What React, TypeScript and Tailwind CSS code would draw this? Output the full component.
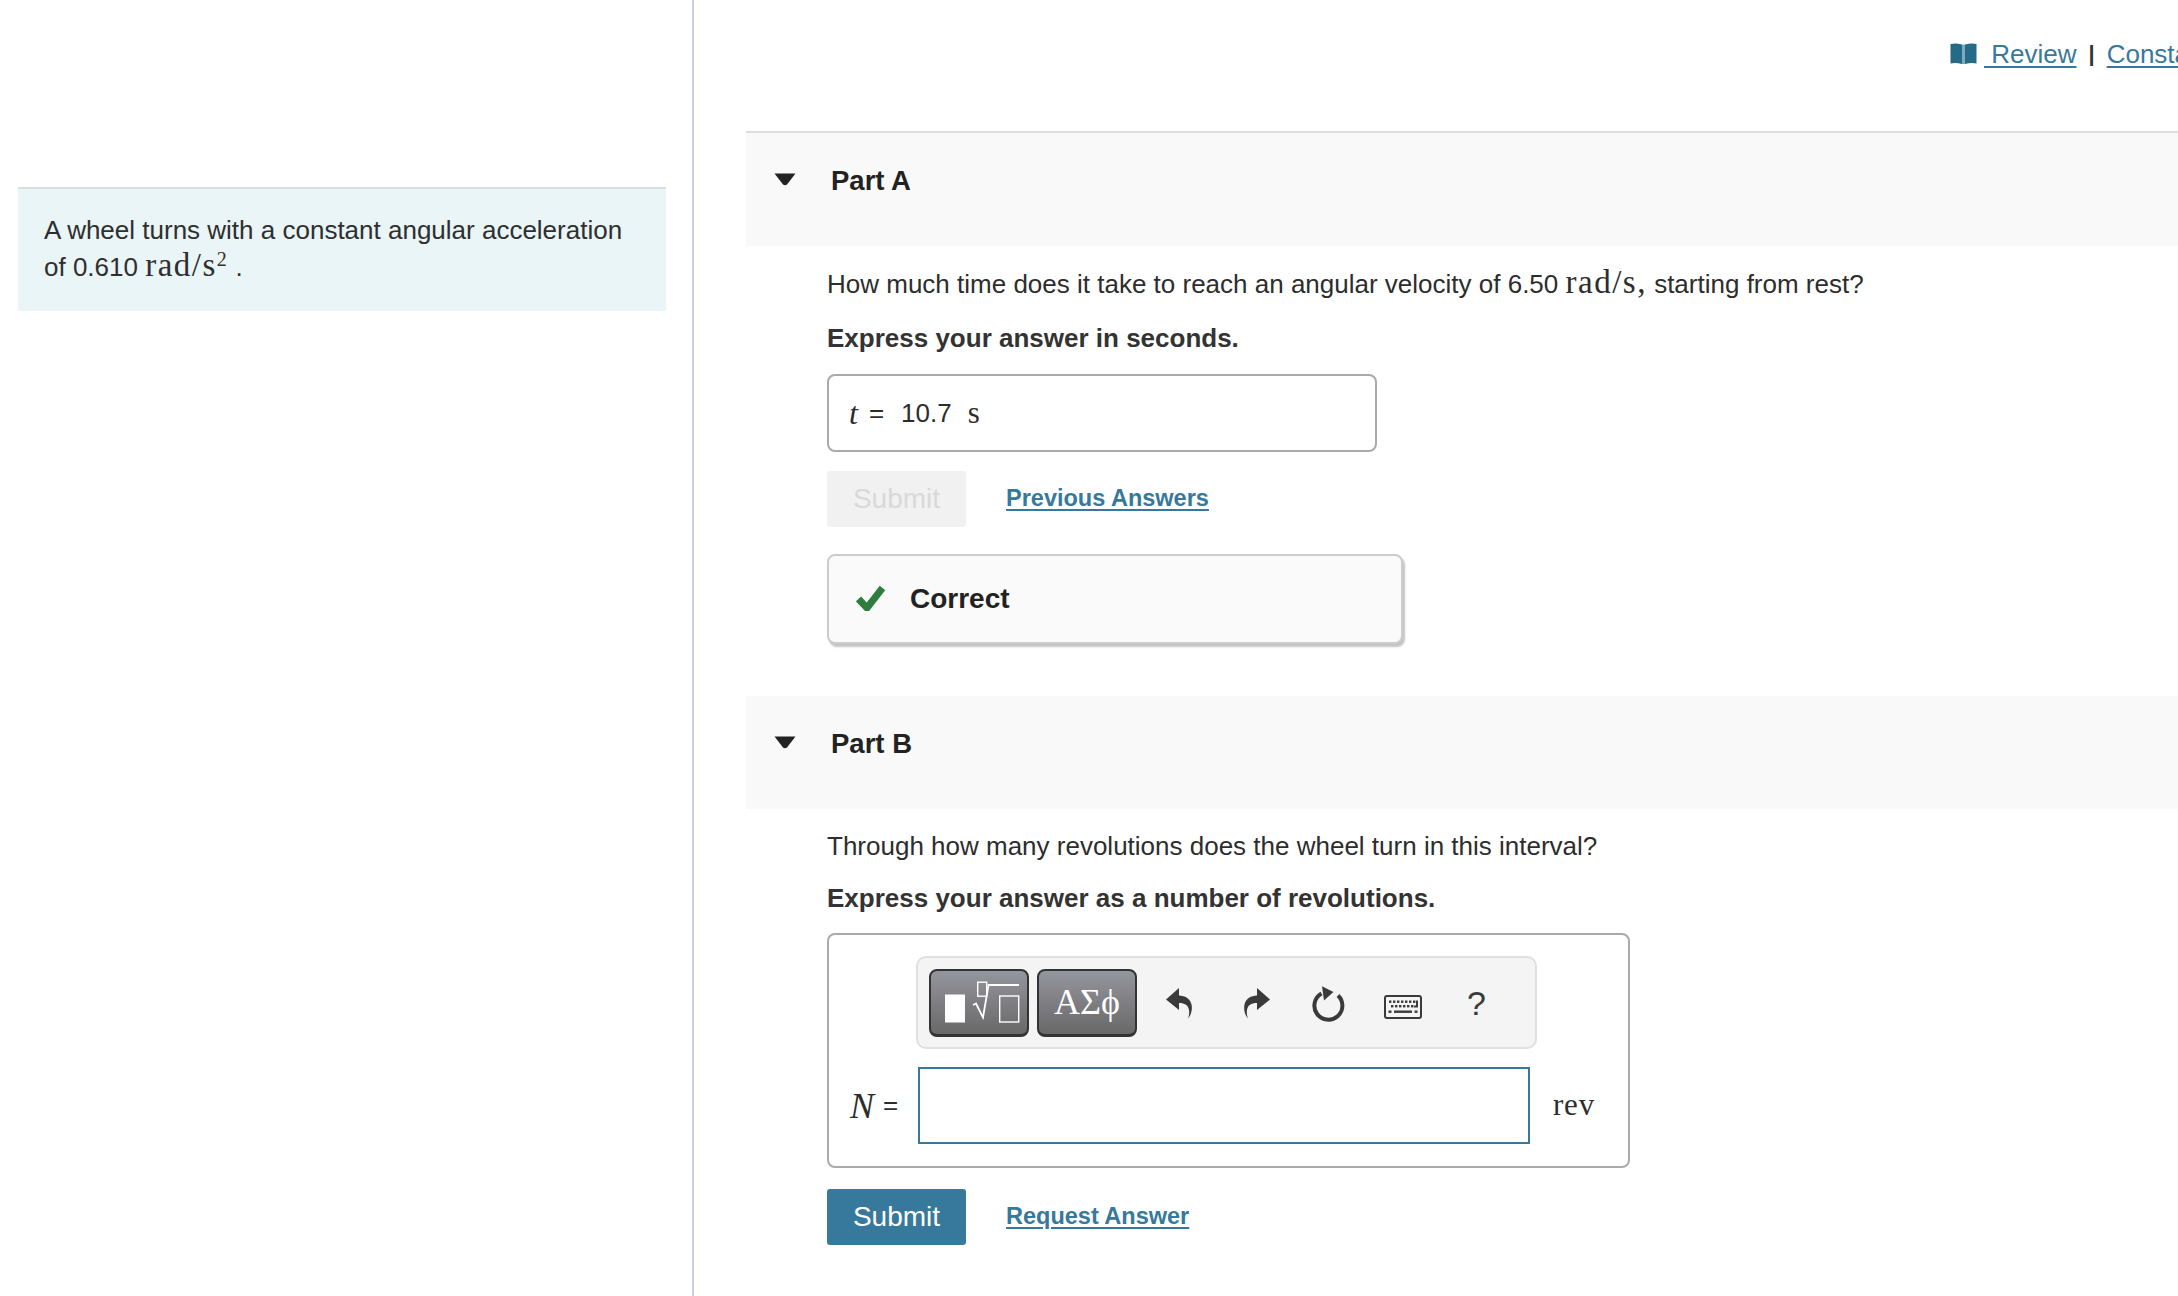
import React from "react";

const sans = "font-['Liberation_Sans',Arial,sans-serif]";
const serif = "font-['Liberation_Serif','Times_New_Roman',serif]";

function Tri() {
  return (
    <svg width="22" height="13" viewBox="0 0 22 13" className="shrink-0">
      <path d="M0.5 0.5H21.5L13 11.5Q11 13 9 11.5Z" fill="#222" />
    </svg>
  );
}

function PartHeader({ label }: { label: string }) {
  return (
    <div className="flex h-[113px] items-start bg-[#f9f9f9] pl-[28px] pt-[27px]">
      <div className="mt-[13px]"><Tri /></div>
      <div className="ml-[35px] text-[27.5px] leading-[42px] font-bold text-[#222]">{label}</div>
    </div>
  );
}

function RootIcon() {
  return (
    <svg width="92" height="50" viewBox="0 0 92 50" className="block">
      <rect x="12" y="17.5" width="20" height="28" fill="#fff" />
      <rect x="44.7" y="5.2" width="9" height="14" fill="none" stroke="#fff" strokeWidth="1.4" />
      <path d="M40 28L43 26.5L50 40.5L55.5 8H86" fill="none" stroke="#fff" strokeWidth="1.8" />
      <rect x="66.7" y="19" width="19" height="26" fill="none" stroke="#fff" strokeWidth="1.4" />
    </svg>
  );
}

function Undo({ flip }: { flip?: boolean }) {
  return (
    <svg width="28" height="32" viewBox="0 0 28 32" className={flip ? "block -scale-x-100" : "block"}>
      <path
        d="M14 1L1 12.5L14 23V16C20 16 23 18 24 23C24.5 26 24 29 23 31.5C26.5 27.5 27.5 22 26.5 17.5C25 11 20 9 14 8.5Z"
        fill="#3a3a3a"
      />
    </svg>
  );
}

function Reload() {
  return (
    <svg width="34" height="38" viewBox="0 0 34 38" className="block">
      <path d="M10.5 9.5A14 14 0 1 0 27 11.5" fill="none" stroke="#3a3a3a" strokeWidth="4" />
      <path d="M12 1.5L22.5 9L12 16Z" fill="#3a3a3a" transform="rotate(-8 16 9)" />
    </svg>
  );
}

function Keyboard() {
  const dots: React.ReactNode[] = [];
  for (let i = 0; i < 7; i++) {
    dots.push(<rect key={"a" + i} x={5 + i * 4} y="5.5" width="2.4" height="2.4" fill="#3a3a3a" />);
    if (i < 6) dots.push(<rect key={"b" + i} x={7 + i * 4} y="10" width="2.4" height="2.4" fill="#3a3a3a" />);
  }
  return (
    <svg width="38" height="24" viewBox="0 0 38 24" className="block">
      <rect x="1" y="1" width="36" height="22" rx="2" fill="#f4f4f4" stroke="#3a3a3a" strokeWidth="2" />
      {dots}
      <path d="M32 5.5H34V12.5H30V10.5H32Z" fill="#3a3a3a" />
      <rect x="4.5" y="15.5" width="3" height="2.4" fill="#3a3a3a" />
      <rect x="10" y="15.5" width="18" height="2.4" fill="#3a3a3a" />
      <rect x="30.5" y="15.5" width="3" height="2.4" fill="#3a3a3a" />
    </svg>
  );
}

function Book() {
  return (
    <svg width="27" height="22" viewBox="0 0 27 22" className="block">
      <path d="M0.5 1Q6 0 12 1.5V21Q6 19.5 0.5 20.5Z" fill="#256a87" />
      <path d="M26.5 1Q21 0 15 1.5V21Q21 19.5 26.5 20.5Z" fill="#256a87" />
      <rect x="12" y="1.5" width="3" height="19.5" fill="#7fa9bc" />
    </svg>
  );
}

export default function App() {
  return (
    <div className={`${sans} flex h-screen w-full overflow-hidden bg-white text-[#2d2d2d]`}>
      <aside className="w-[694px] shrink-0 border-r-2 border-[#c6d3de] pl-[18px] pr-[26px] pt-[187px]">
        <div className="h-[124px] border-t-2 border-[#dcdfe0] bg-[#e9f5f7] px-[26px] pt-[24px] text-[26px] leading-[35px] text-[#2f2f2f]">
          <div className="whitespace-nowrap">A wheel turns with a constant angular acceleration</div>
          <div className="whitespace-nowrap">
            of 0.610 <span className={`${serif} text-[33px] leading-[35px] tracking-[1.5px]`}>rad/s<sup className="text-[20px] leading-none">2</sup></span> .
          </div>
        </div>
      </aside>

      <main className="min-w-0 flex-1 overflow-hidden pl-[52px]">
        <div className="flex h-[131px] items-start whitespace-nowrap pl-[1204px] pt-[38px] text-[26px] leading-[32px] text-[#37799c]">
          <div className="mt-[5px] mr-[7px] shrink-0"><Book /></div>
          <a className="underline underline-offset-[3px]">&nbsp;Review</a>
          <span className="mx-[12px] text-[22px] font-bold text-[#333]">|</span>
          <a className="underline underline-offset-[3px]">Constants</a>
        </div>

        <div className="border-t-2 border-[#dedede]">
          <PartHeader label="Part A" />
        </div>

        <div className="pl-[81px]">
          <div className="mt-[18px] whitespace-nowrap text-[26px] leading-[36px]">
            How much time does it take to reach an angular velocity of 6.50{" "}
            <span className={`${serif} text-[33px] leading-[36px] tracking-[1.5px]`}>rad/s,</span> starting from rest?
          </div>
          <div className="mt-[18px] text-[26px] leading-[36px] font-bold text-[#333]">Express your answer in seconds.</div>
          <div className="mt-[18px] flex h-[78px] w-[550px] items-center rounded-[8px] border-2 border-[#aaa] pl-[20px] text-[26px]">
            <span className={`${serif} text-[32px] italic`}>t</span>
            <span className="ml-[11px]">=</span>
            <span className="ml-[17px]">10.7</span>
            <span className={`${serif} ml-[16px] text-[31px]`}>s</span>
          </div>
          <div className="mt-[19px] flex items-center">
            <div className="flex h-[56px] w-[139px] items-center justify-center rounded-[3px] bg-[#f1f1f1] text-[28px] text-[#d9d9d9]">Submit</div>
            <a className="ml-[40px] text-[23.5px] font-bold text-[#37799c] underline underline-offset-[3px]">Previous Answers</a>
          </div>
          <div className="mt-[27px] flex h-[90px] w-[576px] items-center rounded-[8px] border-2 border-[#ccc] bg-[#fafafa] pl-[27px] shadow-[2px_3px_2px_#c4c4c4]">
            <svg width="29" height="26" viewBox="0 0 29 26" className="shrink-0 -mt-[3px]">
              <path d="M2.5 14L11 23L26.5 3" fill="none" stroke="#2f7d3e" strokeWidth="7" />
            </svg>
            <span className="ml-[25px] text-[28px] font-bold text-[#222]">Correct</span>
          </div>

          <div className="-ml-[81px] mt-[52px]"><PartHeader label="Part B" /></div>

          <div className="mt-[19px] whitespace-nowrap text-[26px] leading-[36px]">Through how many revolutions does the wheel turn in this interval?</div>
          <div className="mt-[16px] text-[26px] leading-[36px] font-bold text-[#333]">Express your answer as a number of revolutions.</div>

          <div className="mt-[17px] h-[235px] w-[803px] rounded-[8px] border-2 border-[#aaa]">
            <div className="ml-[87px] mt-[21px] flex h-[93px] w-[621px] items-center rounded-[10px] border-2 border-[#e0e0e0] bg-[#f4f4f4] pl-[11px]">
              <div className="flex h-[68px] w-[100px] items-center justify-center rounded-[8px] border-2 border-b-[3px] border-[#333] bg-gradient-to-b from-[#95959d] to-[#696969]">
                <RootIcon />
              </div>
              <div className={`${serif} ml-[8px] flex h-[68px] w-[100px] items-center justify-center rounded-[8px] border-2 border-b-[3px] border-[#333] bg-gradient-to-b from-[#95959d] to-[#696969] text-[36px] text-white`}>
                ΑΣϕ
              </div>
              <div className="ml-[28px]"><Undo /></div>
              <div className="ml-[50px]"><Undo flip /></div>
              <div className="ml-[40px]"><Reload /></div>
              <div className="ml-[39px] mt-[8px]"><Keyboard /></div>
              <div className="ml-[45px] text-[34px] leading-none text-[#3a3a3a]">?</div>
            </div>
            <div className="mt-[18px] flex items-center">
              <div className="flex w-[89px] items-center pl-[21px] text-[26px]">
                <span className={`${serif} text-[36px] italic`}>N</span>
                <span className="ml-[9px]">=</span>
              </div>
              <div className="h-[77px] w-[612px] border-2 border-[#37799c]" />
              <div className={`${serif} ml-[23px] text-[31px] tracking-[0.8px]`}>rev</div>
            </div>
          </div>

          <div className="mt-[21px] flex items-center">
            <div className="flex h-[56px] w-[139px] items-center justify-center rounded-[3px] bg-[#37799c] text-[28px] text-white">Submit</div>
            <a className="ml-[40px] text-[23.5px] font-bold text-[#37799c] underline underline-offset-[3px]">Request Answer</a>
          </div>
        </div>
      </main>
    </div>
  );
}
